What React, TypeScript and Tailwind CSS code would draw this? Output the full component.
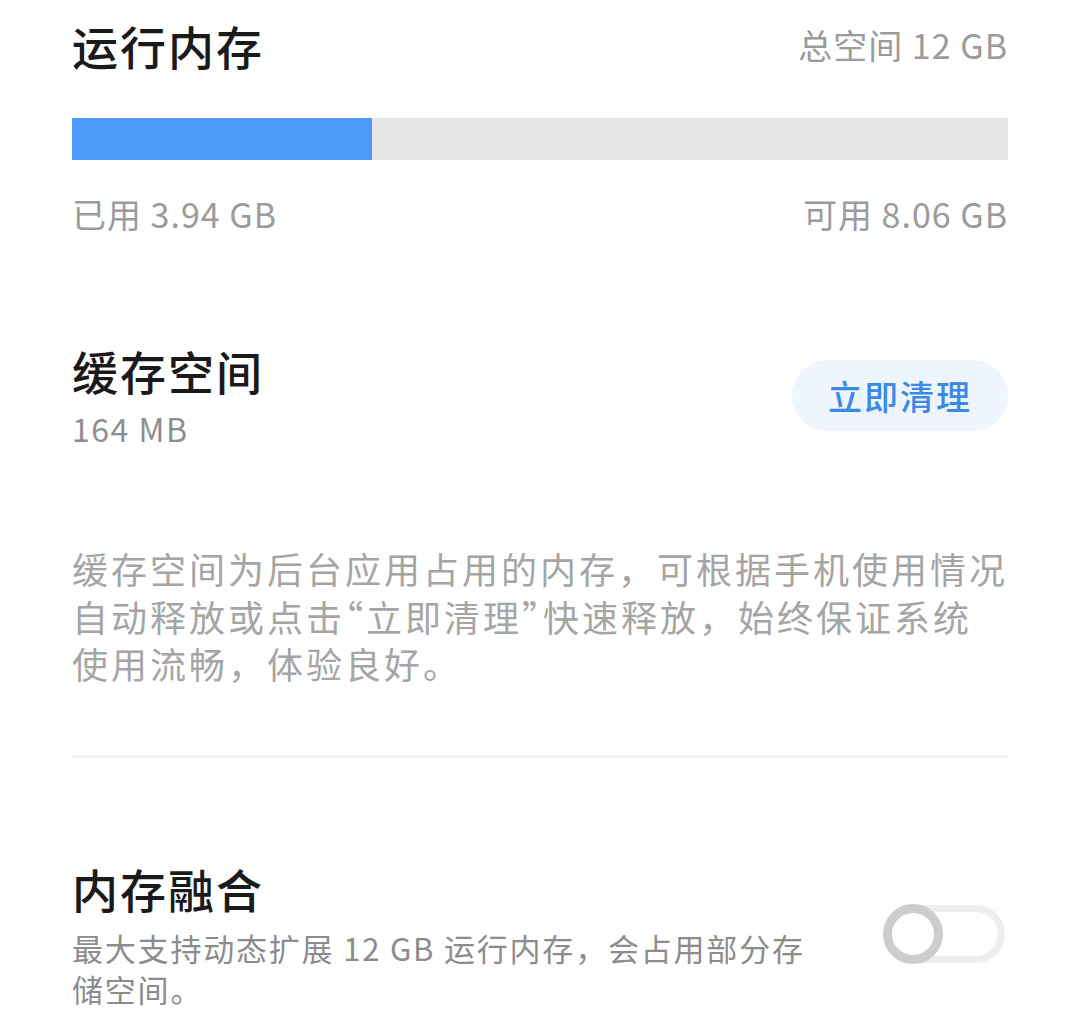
import React from "react";

const FONT = { fontFamily: '"Noto Sans CJK SC", "Noto Sans", sans-serif' };

function Toggle() {
  return (
    <div className="relative h-[60px] w-[122px] mr-[3px] shrink-0">
      <div className="absolute left-[8px] right-0 top-[1px] bottom-[1px] rounded-full border-[7px] border-[#eeeeee] bg-white" />
      <div className="absolute left-0 top-0 h-[60px] w-[60px] rounded-full border-[9px] border-[#cdcdcd] bg-white" />
    </div>
  );
}

export default function App() {
  return (
    <div className="min-h-[1028px] w-full bg-white overflow-hidden" style={FONT}>
      <div className="px-[72px]">
        {/* 运行内存 */}
        <div className="pt-[17px] flex items-center justify-between">
          <div className="text-[46px] leading-[56px] font-medium tracking-[2px] text-[#1a1a1a]">运行内存</div>
          <div className="text-[34px] leading-[44px] tracking-[1px] text-[#9b9b9b]">总空间 12 GB</div>
        </div>
        <div className="mt-[45px] h-[42px] w-full bg-[#e6e6e6] flex">
          <div className="h-full w-[300px] bg-[#4c9bfa]" />
        </div>
        <div className="mt-[32px] flex items-center justify-between text-[34px] leading-[44px] tracking-[1px] text-[#9b9b9b]">
          <div>已用 3.94 GB</div>
          <div>可用 8.06 GB</div>
        </div>

        {/* 缓存空间 */}
        <div className="mt-[106px] flex items-center justify-between">
          <div className="flex flex-col">
            <div className="text-[46px] leading-[56px] font-medium tracking-[2px] text-[#1a1a1a]">缓存空间</div>
            <div className="mt-[10px] text-[32px] leading-[40px] tracking-[1.5px] text-[#8e8e8e]">164 MB</div>
          </div>
          <button className="h-[71px] w-[216px] rounded-full bg-[#eef5fe] text-[34px] font-medium tracking-[2px] text-[#3b8ae6] flex items-center justify-center">
            立即清理
          </button>
        </div>

        <div className="mt-[97px] text-[36px] leading-[47.5px] tracking-[3px] text-[#a5a5a5] whitespace-nowrap">
          <div>缓存空间为后台应用占用的内存，可根据手机使用情况</div>
          <div>
            自动释放或点击<span className="[font-feature-settings:'halt']">“</span>立即清理<span className="[font-feature-settings:'halt']">”</span>快速释放，始终保证系统
          </div>
          <div>使用流畅，体验良好。</div>
        </div>

        <div className="mt-[67px] h-[3px] w-full bg-[#f3f3f3]" />

        {/* 内存融合 */}
        <div className="mt-[102px] flex items-center justify-between">
          <div className="flex flex-col">
            <div className="text-[46px] leading-[56px] font-medium tracking-[2px] text-[#1a1a1a]">内存融合</div>
            <div className="mt-[11px] text-[31px] leading-[41px] tracking-[1.8px] text-[#8c8c8c] whitespace-nowrap">
              <div>最大支持动态扩展 12 GB 运行内存，会占用部分存</div>
              <div>储空间。</div>
            </div>
          </div>
          <Toggle />
        </div>
      </div>
    </div>
  );
}
